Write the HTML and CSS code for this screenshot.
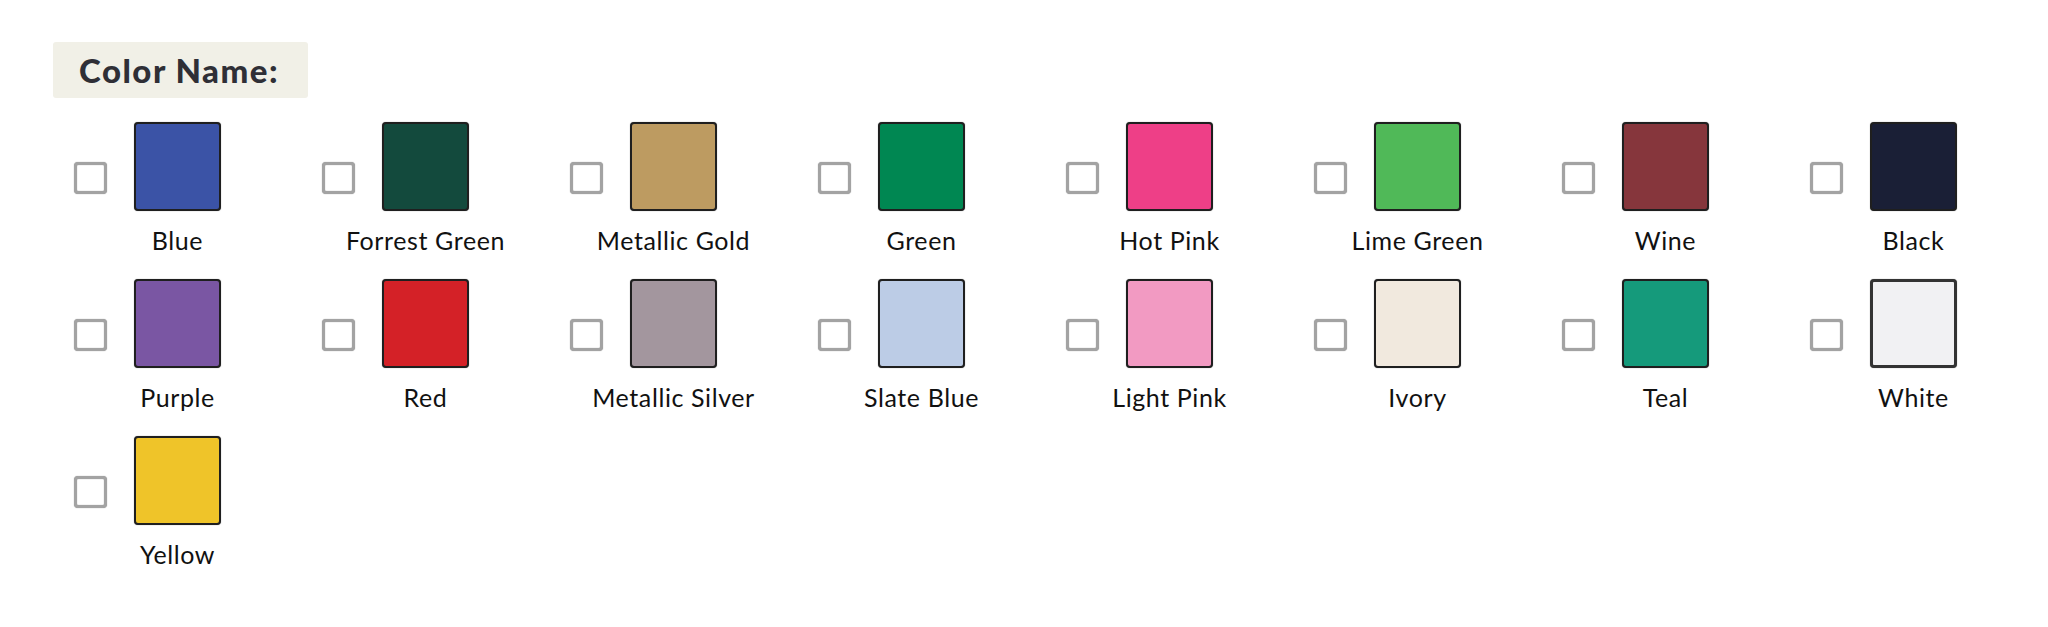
FILE: index.html
```html
<!DOCTYPE html>
<html lang="en">
<head>
<meta charset="utf-8">
<title>Color Name</title>
<link rel="stylesheet" href="styles.css">
</head>
<body>
<div class="page">
  <div class="heading">Color Name:</div>
  <div class="colors">
    <label class="item"><span class="check"></span><span class="swatch c-blue"></span><span class="name">Blue</span></label>
    <label class="item"><span class="check"></span><span class="swatch c-forrest"></span><span class="name">Forrest Green</span></label>
    <label class="item"><span class="check"></span><span class="swatch c-gold"></span><span class="name">Metallic Gold</span></label>
    <label class="item"><span class="check"></span><span class="swatch c-green"></span><span class="name">Green</span></label>
    <label class="item"><span class="check"></span><span class="swatch c-hotpink"></span><span class="name">Hot Pink</span></label>
    <label class="item"><span class="check"></span><span class="swatch c-lime"></span><span class="name">Lime Green</span></label>
    <label class="item"><span class="check"></span><span class="swatch c-wine"></span><span class="name">Wine</span></label>
    <label class="item"><span class="check"></span><span class="swatch c-black"></span><span class="name">Black</span></label>

    <label class="item"><span class="check"></span><span class="swatch c-purple"></span><span class="name">Purple</span></label>
    <label class="item"><span class="check"></span><span class="swatch c-red"></span><span class="name">Red</span></label>
    <label class="item"><span class="check"></span><span class="swatch c-silver"></span><span class="name">Metallic Silver</span></label>
    <label class="item"><span class="check"></span><span class="swatch c-slate"></span><span class="name">Slate Blue</span></label>
    <label class="item"><span class="check"></span><span class="swatch c-lightpink"></span><span class="name">Light Pink</span></label>
    <label class="item"><span class="check"></span><span class="swatch c-ivory"></span><span class="name">Ivory</span></label>
    <label class="item"><span class="check"></span><span class="swatch c-teal"></span><span class="name">Teal</span></label>
    <label class="item"><span class="check"></span><span class="swatch c-white"></span><span class="name">White</span></label>

    <label class="item"><span class="check"></span><span class="swatch c-yellow"></span><span class="name">Yellow</span></label>
  </div>
</div>
</body>
</html>
```
FILE: styles.css
```css
html, body {
  margin: 0;
  padding: 0;
  background: #ffffff;
}

.page {
  padding: 42px 0 0 53px;
  font-family: "Lato", "Open Sans", sans-serif;
}

.heading {
  display: inline-block;
  box-sizing: border-box;
  width: 255px;
  height: 56px;
  padding-left: 26px;
  background: #f1f0e7;
  border-radius: 3px;
  color: #2f2f36;
  font-family: "Lato", sans-serif;
  font-weight: 900;
  font-size: 33px;
  line-height: 56px;
  letter-spacing: 1.5px;
}

.colors {
  display: grid;
  grid-template-columns: repeat(8, 248px);
  row-gap: 24px;
  margin: 24px 0 0 21px;
}

.item {
  display: grid;
  grid-template-columns: 33px 87px;
  column-gap: 27px;
  align-items: start;
}

.check {
  box-sizing: border-box;
  width: 33px;
  height: 32px;
  margin-top: 40px;
  border: 3px solid #a3a3a3;
  border-radius: 4px;
  background: #ffffff;
  box-shadow: 0 0 1px #8a8a8a, inset 0 0 1px #8a8a8a;
}

.swatch {
  box-sizing: border-box;
  width: 87px;
  height: 89px;
  border: 2px solid #1f1f1f;
  border-radius: 4px;
  box-shadow: 0 0 1px rgba(0, 0, 0, 0.5);
}

.name {
  grid-column: 2;
  margin: 15px -70px 0;
  text-align: center;
  font-family: "Lato", "Open Sans", sans-serif;
  font-size: 25px;
  line-height: 29px;
  letter-spacing: 0.6px;
  color: #111111;
  white-space: nowrap;
}

.c-blue { background: #3b53a6; }
.c-forrest { background: #134a3d; }
.c-gold { background: #bd9b61; }
.c-green { background: #008752; }
.c-hotpink { background: #ee3f87; }
.c-lime { background: #50b958; }
.c-wine { background: #86363c; }
.c-black { background: #1a1f36; }
.c-purple { background: #7a56a3; }
.c-red { background: #d42127; }
.c-silver { background: #a3969e; }
.c-slate { background: #bccce6; }
.c-lightpink { background: #f29ac2; }
.c-ivory { background: #f1e9de; }
.c-teal { background: #159a7b; }
.c-white { background: #f1f1f3; border: 3px solid #333333; }
.c-yellow { background: #efc429; }
```
